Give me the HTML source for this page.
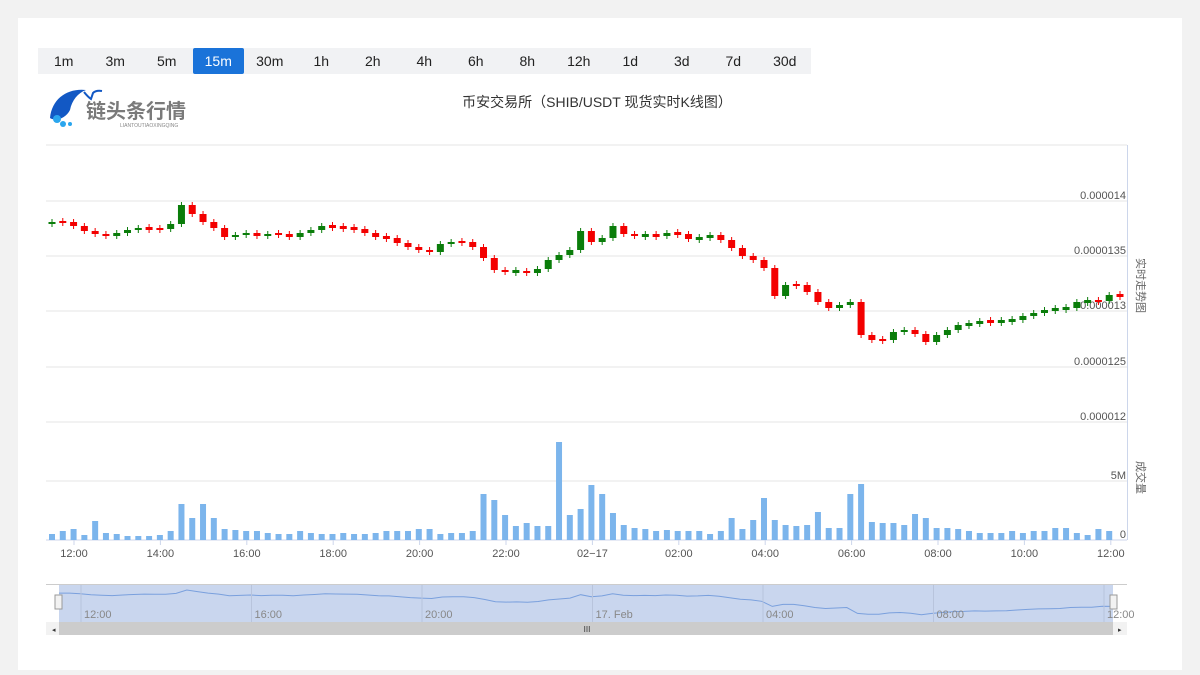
<!DOCTYPE html>
<html><head><meta charset="utf-8"><style>
body{margin:0;background:#f2f2f2;width:1200px;height:675px;overflow:hidden;font-family:"Liberation Sans","Noto Sans CJK SC",sans-serif;}
#panel{position:absolute;left:18px;top:18px;width:1164px;height:652px;background:#fff;}
#tabs{position:absolute;left:38px;top:48px;height:26px;display:flex;background:#f1f2f4;}
#tabs div{width:51.5px;text-align:center;line-height:26px;font-size:14px;color:#222;}
#tabs div.on{background:#1a73d9;color:#fff;border-radius:2px;}
svg{position:absolute;left:0;top:0;}
</style></head><body>
<div id="panel"></div>
<div id="tabs"><div>1m</div><div>3m</div><div>5m</div><div class="on">15m</div><div>30m</div><div>1h</div><div>2h</div><div>4h</div><div>6h</div><div>8h</div><div>12h</div><div>1d</div><div>3d</div><div>7d</div><div>30d</div></div>
<svg id="s" width="1200" height="675" xmlns="http://www.w3.org/2000/svg" font-family="Liberation Sans, Noto Sans CJK SC, sans-serif">
<!-- logo -->
<path d="M50 118 C52 98 68 88 86 90 C78 93 72 100 70 110 C66 118 56 122 50 118Z" fill="#1258c4"/>
<path d="M84 92 Q88 97 91 99 L93 93 Q96 90 102 91" fill="none" stroke="#1258c4" stroke-width="2"/>
<circle cx="57" cy="119" r="4" fill="#2aa6ee"/><circle cx="63" cy="124" r="3" fill="#2aa6ee"/><circle cx="70" cy="124" r="2" fill="#2aa6ee"/>
<text x="86" y="118" font-size="20" font-weight="bold" fill="#7a7a7a">链头条行情</text>
<text x="120" y="127" font-size="5" fill="#888">LIANTOUTIAOXINGQING</text>
<text x="597" y="107" font-size="14" fill="#333" text-anchor="middle">币安交易所（SHIB/USDT 现货实时K线图）</text>
<g stroke="#e6e6e6" stroke-width="1">
<line x1="46" y1="145" x2="1127" y2="145"/><line x1="46" y1="201" x2="1127" y2="201"/><line x1="46" y1="256" x2="1127" y2="256"/><line x1="46" y1="311" x2="1127" y2="311"/><line x1="46" y1="367" x2="1127" y2="367"/><line x1="46" y1="422" x2="1127" y2="422"/><line x1="46" y1="481" x2="1127" y2="481"/><line x1="46" y1="540" x2="1127" y2="540" stroke="#ccd6eb"/>
</g>
<line x1="1127.5" y1="145" x2="1127.5" y2="540" stroke="#ccd6eb"/>
<g font-size="11" fill="#555" text-anchor="end">
<text x="1126" y="199">0.000014</text><text x="1126" y="254">0.0000135</text><text x="1126" y="309">0.000013</text><text x="1126" y="365">0.0000125</text><text x="1126" y="420">0.000012</text><text x="1126" y="479">5M</text><text x="1126" y="538">0</text>
</g>
<text font-size="11" fill="#666" transform="translate(1137,258) rotate(90)">实时走势图</text>
<text font-size="11" fill="#666" transform="translate(1137,461) rotate(90)">成交量</text>
<g id="c"></g><g id="v"></g>
<g font-size="11" fill="#555" text-anchor="middle" id="t"></g>
<!-- navigator -->
<line x1="46" y1="584.5" x2="1127" y2="584.5" stroke="#ccc"/>
<rect x="59" y="585" width="1054" height="37" fill="#c9d6ee"/>
<path id="nl" fill="none" stroke="#7aa0dd" stroke-width="1"/>
<g font-size="11" fill="#888" id="nt"></g>
<rect x="55" y="595" width="7" height="14" fill="#f2f2f2" stroke="#999"/>
<rect x="1110" y="595" width="7" height="14" fill="#f2f2f2" stroke="#999"/>
<rect x="46" y="622" width="1081" height="13" fill="#f2f2f2"/>
<rect x="59" y="622" width="1054" height="13" fill="#ccc"/>
<text x="587" y="632" font-size="8" fill="#333" text-anchor="middle">III</text>
<text x="52" y="632" font-size="7" fill="#333">◂</text><text x="1118" y="632" font-size="7" fill="#333">▸</text>
</svg>
<script>
var ys=[222,222,226,231,234,236,233,230,228,229,229,224,205,214,222,228,237,235,233,236,234,234,237,233,230,226,227,228,229,233,237,238,243,247,250,252,244,242,242,247,258,270,272,271,273,269,260,255,250,231,242,238,226,234,236,235,236,233,234,239,238,235,240,248,256,260,268,296,285,285,292,302,308,305,302,335,340,340,332,330,334,342,335,330,325,324,321,322,321,320,316,313,310,309,308,302,301,301,295,296];
var vols=[6,9,11,5,19,7,6,4,4,4,5,9,36,22,36,22,11,10,9,9,7,6,6,9,7,6,6,7,6,6,7,9,9,9,11,11,6,7,7,9,46,40,25,14,17,14,14,98,25,31,55,46,27,15,12,11,9,10,9,9,9,6,9,22,11,20,42,20,15,14,15,28,12,12,46,56,18,17,17,15,26,22,12,12,11,9,7,7,7,9,7,9,9,12,12,7,5,11,9];
var n=ys.length,x0=52,dx=(1120-52)/(n-1),ns="http://www.w3.org/2000/svg";
function el(p,t,a){var e=document.createElementNS(ns,t);for(var k in a)e.setAttribute(k,a[k]);p.appendChild(e);return e;}
var c=document.getElementById('c'),v=document.getElementById('v');
for(var i=0;i<n;i++){var x=x0+i*dx,o=i?ys[i-1]:ys[0]+2,cl=ys[i];var up=cl<o;var col=up?'#0a7d0a':'#f30000';
var t=Math.min(o,cl),b=Math.max(o,cl);if(b-t<2){t-=1;b+=1;}
el(c,'line',{x1:x,x2:x,y1:t-3,y2:b+3,stroke:col,'stroke-width':1});
el(c,'rect',{x:x-3.5,y:t,width:7,height:b-t,fill:col});}
for(var i=0;i<vols.length;i++){var x=x0+i*dx;el(v,'rect',{x:x-3,y:540-vols[i],width:6,height:vols[i],fill:'#7cb5ec'});}
var tl=['12:00','14:00','16:00','18:00','20:00','22:00','02−17','02:00','04:00','06:00','08:00','10:00','12:00'];
var tg=document.getElementById('t');
for(var i=0;i<tl.length;i++){var x=74+i*86.4;el(tg,'line',{x1:x,x2:x,y1:540,y2:545,stroke:'#ccd6eb'});el(tg,'text',{x:x,y:557}).textContent=tl[i];}
var d='';for(var i=0;i<n;i++){var x=59+i*(1054/(n-1));var y=590+(ys[i]-205)*0.18;d+=(i?'L':'M')+x.toFixed(1)+' '+y.toFixed(1);}
document.getElementById('nl').setAttribute('d',d);
var nt=document.getElementById('nt'),nl=['12:00','16:00','20:00','17. Feb','04:00','08:00','12:00'];
for(var i=0;i<nl.length;i++){var x=81+i*170.5;el(nt,'line',{x1:x,x2:x,y1:585,y2:622,stroke:'#b8c4dc'});el(nt,'text',{x:x+3,y:618}).textContent=nl[i];}
</script>
</body></html>
